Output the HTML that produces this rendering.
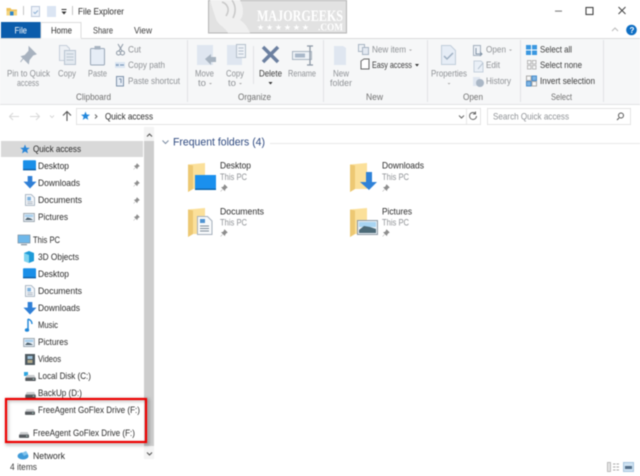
<!DOCTYPE html>
<html><head><meta charset="utf-8"><title>File Explorer</title>
<style>
html,body{margin:0;padding:0;background:#fff;width:640px;height:476px;overflow:hidden}
svg{display:block;filter:blur(.4px)}
text{font-family:"Liberation Sans",sans-serif;font-size:9.4px;fill:#2b2b2b}
.g{fill:#8f9296}.l{fill:#707070}.d{fill:#3c3c3c}
</style></head><body>
<svg width="640" height="476" viewBox="0 0 640 476" xmlns="http://www.w3.org/2000/svg">
<defs>
<symbol id="pin" viewBox="0 0 8 8"><path d="M4.500 .5L7.500 3.500 6.400 3.900 5 5.600 4.800 6.800 1.400 3.400 2.800 3.200 4.200 1.600ZM2.600 5.400L.6 7.500" fill="#8d8d8d" stroke="#8d8d8d" stroke-width=".5"/></symbol>
<symbol id="desk" viewBox="0 0 15 12"><rect x="0" y="0" width="15" height="11" rx="1" fill="#1a8fe8"/><rect x="0" y="10" width="15" height="1.600" fill="#0c5fa8"/></symbol>
<symbol id="dl" viewBox="0 0 15 14"><path d="M5 0h5v6h4.500L7.500 13.500.5 6H5Z" fill="#2f7fd6"/></symbol>
<symbol id="doc" viewBox="0 0 11 13"><path d="M.5.5h6.500l3.500 3.500v8.500H.5Z" fill="#f5f7fa" stroke="#a5b2c0"/><rect x="2.500" y="3" width="4" height="4" fill="#7fb2dd"/><path d="M2.500 8.500h6M2.500 10.500h6" stroke="#a8b3bf"/></symbol>
<symbol id="pic" viewBox="0 0 14 11"><rect x=".5" y=".5" width="13" height="10" fill="#e8f0f7" stroke="#8f9aa5"/><path d="M2 8.500L5 5.500 9 6.500 12 8.500Z" fill="#4d5f6b"/><rect x="2" y="2" width="10" height="3" fill="#a9d0ee"/></symbol>
<symbol id="drv" viewBox="0 0 14 8"><path d="M2 0h10l2 4H0Z" fill="#c9cbcd"/><rect y="3.500" width="14" height="4.500" rx="1" fill="#55595d"/><rect x="10" y="5" width="2" height="1" fill="#cfe"/></symbol>
<symbol id="folder" viewBox="0 0 28 29"><path d="M0 1.500L17 0V26H5L0 29Z" fill="#fbe09a"/><path d="M0 1.500L5 2.500V26L0 29Z" fill="#edc873"/></symbol>
</defs>

<rect width="640" height="476" fill="#fff"/>

<!-- Title bar -->
<path d="M6.500 8h4l1 1.500h5.500v6H6.500Z" fill="#eec25c"/><rect x="6.500" y="11" width="10.500" height="4.500" fill="#f5d57f"/><rect x="10" y="11.500" width="3.500" height="4" fill="#2f86c9"/>
<rect x="23" y="6" width="1" height="9" fill="#c5c5c5"/>
<rect x="31.500" y="6.500" width="8" height="10" fill="#eef3fa" stroke="#bcc9db"/><path d="M33.500 12l1.500 1.500 3-3" fill="none" stroke="#8fb0d4"/>
<rect x="47" y="6" width="9" height="11" fill="#dbe5f3"/>
<rect x="61.500" y="9" width="5" height="1" fill="#333"/><path d="M61.500 11.500h5L64 14.500Z" fill="#333"/>
<rect x="72" y="6" width="1" height="9" fill="#c5c5c5"/>
<text x="78" y="14.500" textLength="46" lengthAdjust="spacingAndGlyphs">File Explorer</text>

<!-- Watermark -->
<rect x="208.500" y=".5" width="138" height="32.500" fill="#e2e2e2" stroke="#b5b5b5"/>
<path d="M210 0h30c4 8 4 16 0 20 5 3 8 8 10 13h-22c-3-6-10-8-12-14-2-6-4-12-6-19Z" fill="#f0f0f0"/>
<path d="M222 2c6 2 8 8 4 14M232 0c4 6 4 12 1 18" fill="none" stroke="#c8c8c8" stroke-width="1.500"/>
<text x="257" y="21" textLength="86" lengthAdjust="spacingAndGlyphs" style="font-family:'Liberation Serif',serif;font-weight:bold;font-size:16px;fill:#fff">MAJORGEEKS</text>
<text x="257" y="30" textLength="52" style="font-size:8px;fill:#fff">★★★★★★</text>
<text x="318" y="30.500" textLength="25" lengthAdjust="spacingAndGlyphs" style="font-family:'Liberation Serif',serif;font-weight:bold;font-size:10px;fill:#fff">.COM</text>

<!-- Window controls -->
<rect x="555" y="10.500" width="7" height="1.200" fill="#888"/>
<rect x="587" y="7.500" width="7" height="7" fill="none" stroke="#444" stroke-width="1.100" transform="translate(-1 0)"/>
<path d="M618.500 7l7 7M625.500 7l-7 7" stroke="#444" stroke-width="1"/>
<path d="M612 31l3-3 3 3" fill="none" stroke="#bbb"/>
<circle cx="631.500" cy="30" r="5.300" fill="#0f6fc4"/><text x="629.500" y="33" style="font-size:8px;font-weight:bold;fill:#fff">?</text>

<!-- Tabs -->
<rect x="1" y="22" width="40" height="17" fill="#0b5cab"/>
<text x="14.500" y="33.500" textLength="12.500" lengthAdjust="spacingAndGlyphs" style="fill:#fff">File</text>
<path d="M41 38.500V22.500H81V38.500" fill="#fff" stroke="#dcdcdc"/>
<text x="51" y="33.500" textLength="21" lengthAdjust="spacingAndGlyphs">Home</text>
<text x="93" y="33.500" textLength="20" lengthAdjust="spacingAndGlyphs" class="d">Share</text>
<text x="134" y="33.500" textLength="18" lengthAdjust="spacingAndGlyphs" class="d">View</text>

<!-- Ribbon -->
<rect x="0" y="38" width="640" height="66" fill="#f6f7f8"/>
<rect x="0" y="38" width="41" height="1" fill="#dadbdc"/><rect x="81" y="38" width="559" height="1" fill="#dadbdc"/>
<rect x="0" y="104" width="640" height="1" fill="#e2e3e4"/>
<g fill="#e2e3e5"><rect x="187" y="40" width="1" height="62"/><rect x="323" y="40" width="1" height="62"/><rect x="427" y="40" width="1" height="62"/><rect x="520" y="40" width="1" height="62"/><rect x="603" y="40" width="1" height="62"/><rect x="253" y="46" width="1" height="38"/></g>

<!-- Clipboard icons -->
<path d="M29 47l7 7-3 1-4 5-.5 3.500-7-7 3.500-1 4-4.500ZM23.500 58l-3 4" fill="#a8b2bf" stroke="#a8b2bf"/>
<path d="M59.500 45.500h7l3 3v12h-10Z" fill="#eef1f5" stroke="#c5ced9"/><rect x="64.500" y="50.500" width="11" height="14" fill="#e3e9f0" stroke="#b9c4d1"/><path d="M66.500 54h7M66.500 57h7M66.500 60h7" stroke="#bcc7d3"/>
<rect x="90.500" y="48.500" width="14" height="16.500" rx="1" fill="#e6edf6" stroke="#9aa8b8"/><rect x="94.500" y="46" width="6" height="3.500" fill="#a8b3c1"/>
<path d="M118 44l4 7M123 44l-4 7" stroke="#8e99a6" fill="none"/><circle cx="118.500" cy="53" r="2" fill="none" stroke="#8e99a6"/><circle cx="122.500" cy="53" r="2" fill="none" stroke="#8e99a6"/>
<rect x="115" y="62" width="10" height="6" fill="#dce6f2"/><path d="M116.500 64v2M118 64v2M120 65h4" stroke="#6e8eb2"/>
<rect x="116.500" y="76.500" width="7" height="9.500" fill="#e6edf6" stroke="#7f93ab"/><path d="M119 79h2v4" stroke="#7f93ab" fill="none"/>
<text x="7" y="76.500" textLength="43" lengthAdjust="spacingAndGlyphs" class="g">Pin to Quick</text>
<text x="17" y="86" textLength="22" lengthAdjust="spacingAndGlyphs" class="g">access</text>
<text x="58" y="76.500" textLength="18" lengthAdjust="spacingAndGlyphs" class="g">Copy</text>
<text x="88" y="76.500" textLength="19" lengthAdjust="spacingAndGlyphs" class="g">Paste</text>
<text x="128" y="52.500" textLength="13" lengthAdjust="spacingAndGlyphs" class="g">Cut</text>
<text x="128" y="68" textLength="37" lengthAdjust="spacingAndGlyphs" class="g">Copy path</text>
<text x="128" y="84" textLength="52" lengthAdjust="spacingAndGlyphs" class="g">Paste shortcut</text>
<text x="76" y="100" textLength="35" lengthAdjust="spacingAndGlyphs" class="l">Clipboard</text>

<!-- Organize -->
<rect x="197" y="45" width="16" height="20" fill="#dfe6f0"/><path d="M205 59l6-5v3h5v5h-5v3Z" fill="#a7b3c0"/>
<rect x="227" y="45" width="15" height="20" fill="#dfe6f0"/><rect x="236.500" y="44.500" width="9" height="13" fill="#eef2f7" stroke="#b5c0cc"/><path d="M238.500 48h5M238.500 51h5M238.500 54h5" stroke="#b5c0cc"/>
<path d="M263 47l15 15M278 47L263 62" stroke="#6c80a0" stroke-width="3.500"/>
<rect x="292.500" y="51.500" width="19" height="8" fill="#eef2f7" stroke="#aab5c2"/><rect x="295" y="53.500" width="10" height="4" fill="#a9b8c9"/><path d="M307 46h6M310 46v19M307 65h6" stroke="#8d98a6" stroke-width="1.300" fill="none"/>
<text x="195" y="76.500" textLength="19" lengthAdjust="spacingAndGlyphs" class="g">Move</text>
<text x="198" y="86" textLength="8" lengthAdjust="spacingAndGlyphs" class="g">to</text><path d="M209 83h3l-1.500 1.500Z" fill="#aaa"/>
<text x="226" y="76.500" textLength="18" lengthAdjust="spacingAndGlyphs" class="g">Copy</text>
<text x="228" y="86" textLength="8" lengthAdjust="spacingAndGlyphs" class="g">to</text><path d="M239 83h3l-1.500 1.500Z" fill="#aaa"/>
<text x="259" y="76.500" textLength="23" lengthAdjust="spacingAndGlyphs" class="d">Delete</text>
<path d="M268.500 82h4l-2 2.500Z" fill="#333"/>
<text x="288" y="76.500" textLength="28" lengthAdjust="spacingAndGlyphs" class="g">Rename</text>
<text x="238" y="100" textLength="33" lengthAdjust="spacingAndGlyphs" class="l">Organize</text>

<!-- New -->
<path d="M334 46h9l3 2v17h-12Z" fill="#dfe6f0"/>
<rect x="358.500" y="44.500" width="6" height="7" fill="#eef2f7" stroke="#a9b5c3"/><rect x="362.500" y="47.500" width="6" height="7" fill="#e3e9f1" stroke="#a9b5c3"/>
<path d="M361 61l3-2h5v10h-8Z" fill="#fff" stroke="#666"/>
<text x="372" y="52.500" textLength="34" lengthAdjust="spacingAndGlyphs" class="g">New item</text><path d="M409 49.500h3l-1.500 1.500Z" fill="#aaa"/>
<text x="372" y="68" textLength="40" lengthAdjust="spacingAndGlyphs" class="d">Easy access</text><path d="M415 64h4l-2 2.500Z" fill="#333"/>
<text x="333" y="76.500" textLength="16" lengthAdjust="spacingAndGlyphs" class="g">New</text>
<text x="330" y="86" textLength="22" lengthAdjust="spacingAndGlyphs" class="g">folder</text>
<text x="366" y="100" textLength="17" lengthAdjust="spacingAndGlyphs" class="l">New</text>

<!-- Open -->
<path d="M441.500 45.500h9l5 5v14h-14Z" fill="#e6edf6" stroke="#c2cedb"/><path d="M444 56l3 3 6-6" fill="none" stroke="#9fb0c2" stroke-width="1.500"/>
<text x="431" y="76.500" textLength="36" lengthAdjust="spacingAndGlyphs" class="g">Properties</text><path d="M447.500 83h3L449 84.500Z" fill="#aaa"/>
<rect x="473.500" y="45.500" width="7" height="10" fill="#eef2f7" stroke="#a3afbd"/><path d="M476 48v6h6M480 52l2 2-2 2" stroke="#8596a8" fill="none"/>
<path d="M474 61h7l2 2v9h-9Z" fill="#eaf0f7" stroke="#c5d0dc"/><path d="M478 69l5-6" stroke="#b9c5d2"/>
<rect x="473" y="77" width="7" height="9" fill="#dfe6f0"/><circle cx="480" cy="83" r="4" fill="#aab7c6"/>
<text x="486" y="52.500" textLength="20" lengthAdjust="spacingAndGlyphs" class="g">Open</text><path d="M509 49.500h3l-1.500 1.500Z" fill="#aaa"/>
<text x="486" y="68" textLength="14" lengthAdjust="spacingAndGlyphs" class="g">Edit</text>
<text x="486" y="84" textLength="25" lengthAdjust="spacingAndGlyphs" class="g">History</text>
<text x="463" y="100" textLength="20" lengthAdjust="spacingAndGlyphs" class="l">Open</text>

<!-- Select -->
<rect x="526" y="45" width="11" height="10" fill="#3a97e0"/><path d="M531.500 45v10M526 50h11" stroke="#fff"/>
<g fill="none" stroke="#b8b8b8"><rect x="527.500" y="60.500" width="3.500" height="3.500"/><rect x="532.500" y="60.500" width="3.500" height="3.500"/><rect x="527.500" y="65.500" width="3.500" height="3.500"/><rect x="532.500" y="65.500" width="3.500" height="3.500"/></g>
<g fill="none" stroke="#4b8ecb"><rect x="532" y="76" width="4.500" height="4.500" fill="#7fb5e4"/><rect x="526.500" y="81.500" width="4.500" height="4.500" fill="#7fb5e4"/></g>
<g fill="none" stroke="#aaa"><rect x="526.500" y="76" width="4.500" height="4.500"/><rect x="532" y="81.500" width="4.500" height="4.500"/></g>
<text x="540" y="52.500" textLength="32" lengthAdjust="spacingAndGlyphs" class="d">Select all</text>
<text x="540" y="68" textLength="42" lengthAdjust="spacingAndGlyphs" class="d">Select none</text>
<text x="540" y="84" textLength="55" lengthAdjust="spacingAndGlyphs" class="d">Invert selection</text>
<text x="551" y="100" textLength="21" lengthAdjust="spacingAndGlyphs" class="l">Select</text>

<!-- Nav bar -->
<path d="M19 116.500h-9M13 113l-3.500 3.500L13 120" fill="none" stroke="#d8d8d8"/>
<path d="M30 116.500h9M36 113l3.500 3.500L36 120" fill="none" stroke="#d8d8d8"/>
<path d="M50 115.500l2 2 2-2" fill="none" stroke="#d8d8d8"/>
<path d="M67 121v-9M63 115.500l4-4 4 4" fill="none" stroke="#555" stroke-width="1.100"/>
<rect x="76.500" y="108.500" width="404" height="16" fill="#fff" stroke="#e3e3e3"/>
<path d="M85.500 111.500l1.200 3 3.300.2-2.600 2 .9 3.200-2.800-1.800-2.800 1.800.9-3.200-2.600-2 3.300-.2Z" fill="#2488dc"/>
<path d="M95 114.500l2 2-2 2" fill="none" stroke="#666"/>
<text x="105" y="119.500" textLength="48" lengthAdjust="spacingAndGlyphs">Quick access</text>
<path d="M459 115.500l2.500 2.500 2.500-2.500" fill="none" stroke="#666"/>
<rect x="466" y="109" width="1" height="15" fill="#e8e8e8"/>
<path d="M476.500 116a3.500 3.500 0 1 1-1-2.500M475.500 111.500v2.500h-2.500" fill="none" stroke="#666"/>
<rect x="487.500" y="108.500" width="143" height="16" fill="#fff" stroke="#e3e3e3"/>
<text x="493" y="119.500" textLength="76" lengthAdjust="spacingAndGlyphs" class="g">Search Quick access</text>
<circle cx="621" cy="115.500" r="2.500" fill="none" stroke="#555"/><path d="M619 118l-2 2" stroke="#555" stroke-width="1.100"/>

<!-- Sidebar -->
<rect x="1" y="141" width="142" height="16" fill="#d9d9d9"/>
<rect x="144" y="127" width="10" height="332" fill="#f4f4f4"/>
<rect x="144" y="141" width="10" height="305" fill="#cdcdcd"/>
<path d="M147 136.500l2.500-2.500 2.500 2.500" fill="none" stroke="#555" stroke-width="1.100"/>
<path d="M147 452.500l2.500 2.500 2.500-2.500" fill="none" stroke="#555" stroke-width="1.100"/>

<path d="M25 144.500l1.300 3.200 3.500.2-2.700 2.100.9 3.400-3-1.900-3 1.900.9-3.400-2.700-2.100 3.500-.2Z" fill="#2a86d8"/>
<text x="33" y="152" textLength="48" lengthAdjust="spacingAndGlyphs">Quick access</text>

<use href="#desk" x="23" y="160" width="13" height="11"/><text x="38" y="169" textLength="31" lengthAdjust="spacingAndGlyphs">Desktop</text>
<use href="#dl" x="23" y="176" width="14" height="13"/><text x="38" y="186" textLength="42" lengthAdjust="spacingAndGlyphs">Downloads</text>
<use href="#doc" x="25" y="194" width="10" height="12"/><text x="38" y="203" textLength="44" lengthAdjust="spacingAndGlyphs">Documents</text>
<use href="#pic" x="23" y="213" width="12" height="9"/><text x="38" y="220" textLength="30" lengthAdjust="spacingAndGlyphs">Pictures</text>
<use href="#pin" x="133" y="163" width="7" height="7"/><use href="#pin" x="133" y="180" width="7" height="7"/><use href="#pin" x="133" y="197" width="7" height="7"/><use href="#pin" x="133" y="214" width="7" height="7"/>

<rect x="18" y="235" width="12" height="8" fill="#6fb8ea" stroke="#7d8f9e" stroke-width=".7"/><rect x="21" y="244" width="6" height="1.300" fill="#8b98a5"/>
<text x="33" y="243" textLength="27" lengthAdjust="spacingAndGlyphs">This PC</text>
<path d="M24 253l5-2 5 2v8l-5 2-5-2Z" fill="#1e9bd8"/><path d="M24 253l5 2v8l-5-2Z" fill="#7fd4f0"/>
<text x="38" y="260" textLength="41" lengthAdjust="spacingAndGlyphs">3D Objects</text>
<use href="#desk" x="23" y="268" width="13" height="11"/><text x="38" y="277" textLength="31" lengthAdjust="spacingAndGlyphs">Desktop</text>
<use href="#doc" x="25" y="285" width="10" height="12"/><text x="38" y="294" textLength="44" lengthAdjust="spacingAndGlyphs">Documents</text>
<use href="#dl" x="23" y="302" width="14" height="13"/><text x="38" y="311" textLength="42" lengthAdjust="spacingAndGlyphs">Downloads</text>
<path d="M28 319v10.500" stroke="#1f86d8" stroke-width="1.400"/><ellipse cx="27" cy="330" rx="2.200" ry="1.800" fill="#1f86d8"/><path d="M28 319c3 1 4 3 4 5" fill="none" stroke="#1f86d8" stroke-width="1.400"/>
<text x="38" y="328" textLength="20" lengthAdjust="spacingAndGlyphs">Music</text>
<use href="#pic" x="23" y="338" width="12" height="9"/><text x="38" y="345" textLength="30" lengthAdjust="spacingAndGlyphs">Pictures</text>
<rect x="25" y="354" width="10" height="11" fill="#4e5960"/><rect x="27.500" y="356" width="5" height="3" fill="#9cc0d8"/><rect x="27.500" y="360" width="5" height="3" fill="#b0a888"/>
<text x="38" y="362" textLength="23" lengthAdjust="spacingAndGlyphs">Videos</text>
<rect x="24" y="372" width="4" height="4" fill="#2ea6e0"/><use href="#drv" x="25" y="375" width="11" height="6"/>
<text x="38" y="379" textLength="53" lengthAdjust="spacingAndGlyphs">Local Disk (C:)</text>
<use href="#drv" x="25" y="392" width="11" height="6"/>
<text x="38" y="396" textLength="44" lengthAdjust="spacingAndGlyphs">BackUp (D:)</text>
<use href="#drv" x="25" y="409" width="10" height="6"/>
<text x="38" y="413" textLength="102" lengthAdjust="spacingAndGlyphs">FreeAgent GoFlex Drive (F:)</text>
<use href="#drv" x="19" y="432" width="10" height="6"/>
<text x="33" y="436" textLength="102" lengthAdjust="spacingAndGlyphs">FreeAgent GoFlex Drive (F:)</text>

<!-- Red box -->
<rect x="7" y="400" width="141" height="44" fill="none" stroke="#000" stroke-opacity=".25" stroke-width="3" style="filter:blur(1.500px)"/>
<rect x="6" y="399" width="140" height="43" fill="none" stroke="#ee0000" stroke-width="2.200"/>

<ellipse cx="23" cy="456" rx="5.500" ry="3.500" fill="#3f9ad8"/><path d="M22 453l4-2 2 3-4 2Z" fill="#7fc2ec"/>
<text x="33" y="459" textLength="32" lengthAdjust="spacingAndGlyphs">Network</text>

<text x="10" y="470" textLength="27" lengthAdjust="spacingAndGlyphs" class="d">4 items</text>
<rect x="607.500" y="462.500" width="3" height="9" fill="#e8e8e8" stroke="#bbb"/><path d="M613 464h7M613 467h7M613 470h7" stroke="#aaa" stroke-dasharray="2.500 1"/>
<rect x="623.500" y="462.500" width="10" height="9" fill="#cfe3f3" stroke="#a9c6de"/><rect x="625" y="466" width="7" height="3" fill="#56718a"/>

<!-- Main content -->
<path d="M162.500 140.500l3 3 3-3" fill="none" stroke="#7d8da3"/>
<text x="173" y="145.500" textLength="92" lengthAdjust="spacingAndGlyphs" style="font-size:11px;fill:#2f4a80">Frequent folders (4)</text>
<rect x="270" y="143" width="370" height="1" fill="#e8e8e8"/>

<!-- Desktop folder -->
<use href="#folder" x="188" y="163" width="28" height="29"/>
<rect x="195" y="175" width="21" height="15" fill="#1a90ee"/><rect x="195" y="188.500" width="21" height="1.500" fill="#0d66b0"/>
<text x="220" y="168.500" textLength="31" lengthAdjust="spacingAndGlyphs">Desktop</text>
<text x="220" y="180" textLength="27" lengthAdjust="spacingAndGlyphs" class="g">This PC</text>
<use href="#pin" x="220" y="184" width="8" height="8"/>

<!-- Downloads folder -->
<use href="#folder" x="350" y="163" width="28" height="29"/>
<path d="M366 172h6v10h5l-8 8-9-8h6Z" fill="#2f82d8"/>
<text x="382" y="168.500" textLength="42" lengthAdjust="spacingAndGlyphs">Downloads</text>
<text x="382" y="180" textLength="27" lengthAdjust="spacingAndGlyphs" class="g">This PC</text>
<use href="#pin" x="382" y="184" width="8" height="8"/>

<!-- Documents folder -->
<use href="#folder" x="188" y="208" width="28" height="29"/>
<path d="M197.500 216.500h10l4.500 4.500v13.500h-14.500Z" fill="#f7f9fb" stroke="#a7b1bc"/><rect x="200" y="219" width="5" height="4" fill="#4f93d1"/><path d="M200 226h9M200 228.500h9M200 231h9" stroke="#7e8c9a"/>
<text x="220" y="214.500" textLength="44" lengthAdjust="spacingAndGlyphs">Documents</text>
<text x="220" y="225.500" textLength="27" lengthAdjust="spacingAndGlyphs" class="g">This PC</text>
<use href="#pin" x="220" y="229" width="8" height="8"/>

<!-- Pictures folder -->
<use href="#folder" x="350" y="208" width="28" height="29"/>
<rect x="357.500" y="220.500" width="20" height="14" fill="#e8f0f6" stroke="#8f9aa5"/><rect x="359" y="222" width="17" height="5" fill="#a9d5f2"/><path d="M359 230l5-4 6 1 6 2v4h-17Z" fill="#4d6b78"/>
<text x="382" y="214.500" textLength="30" lengthAdjust="spacingAndGlyphs">Pictures</text>
<text x="382" y="225.500" textLength="27" lengthAdjust="spacingAndGlyphs" class="g">This PC</text>
<use href="#pin" x="382" y="229" width="8" height="8"/>
</svg>
</body></html>
